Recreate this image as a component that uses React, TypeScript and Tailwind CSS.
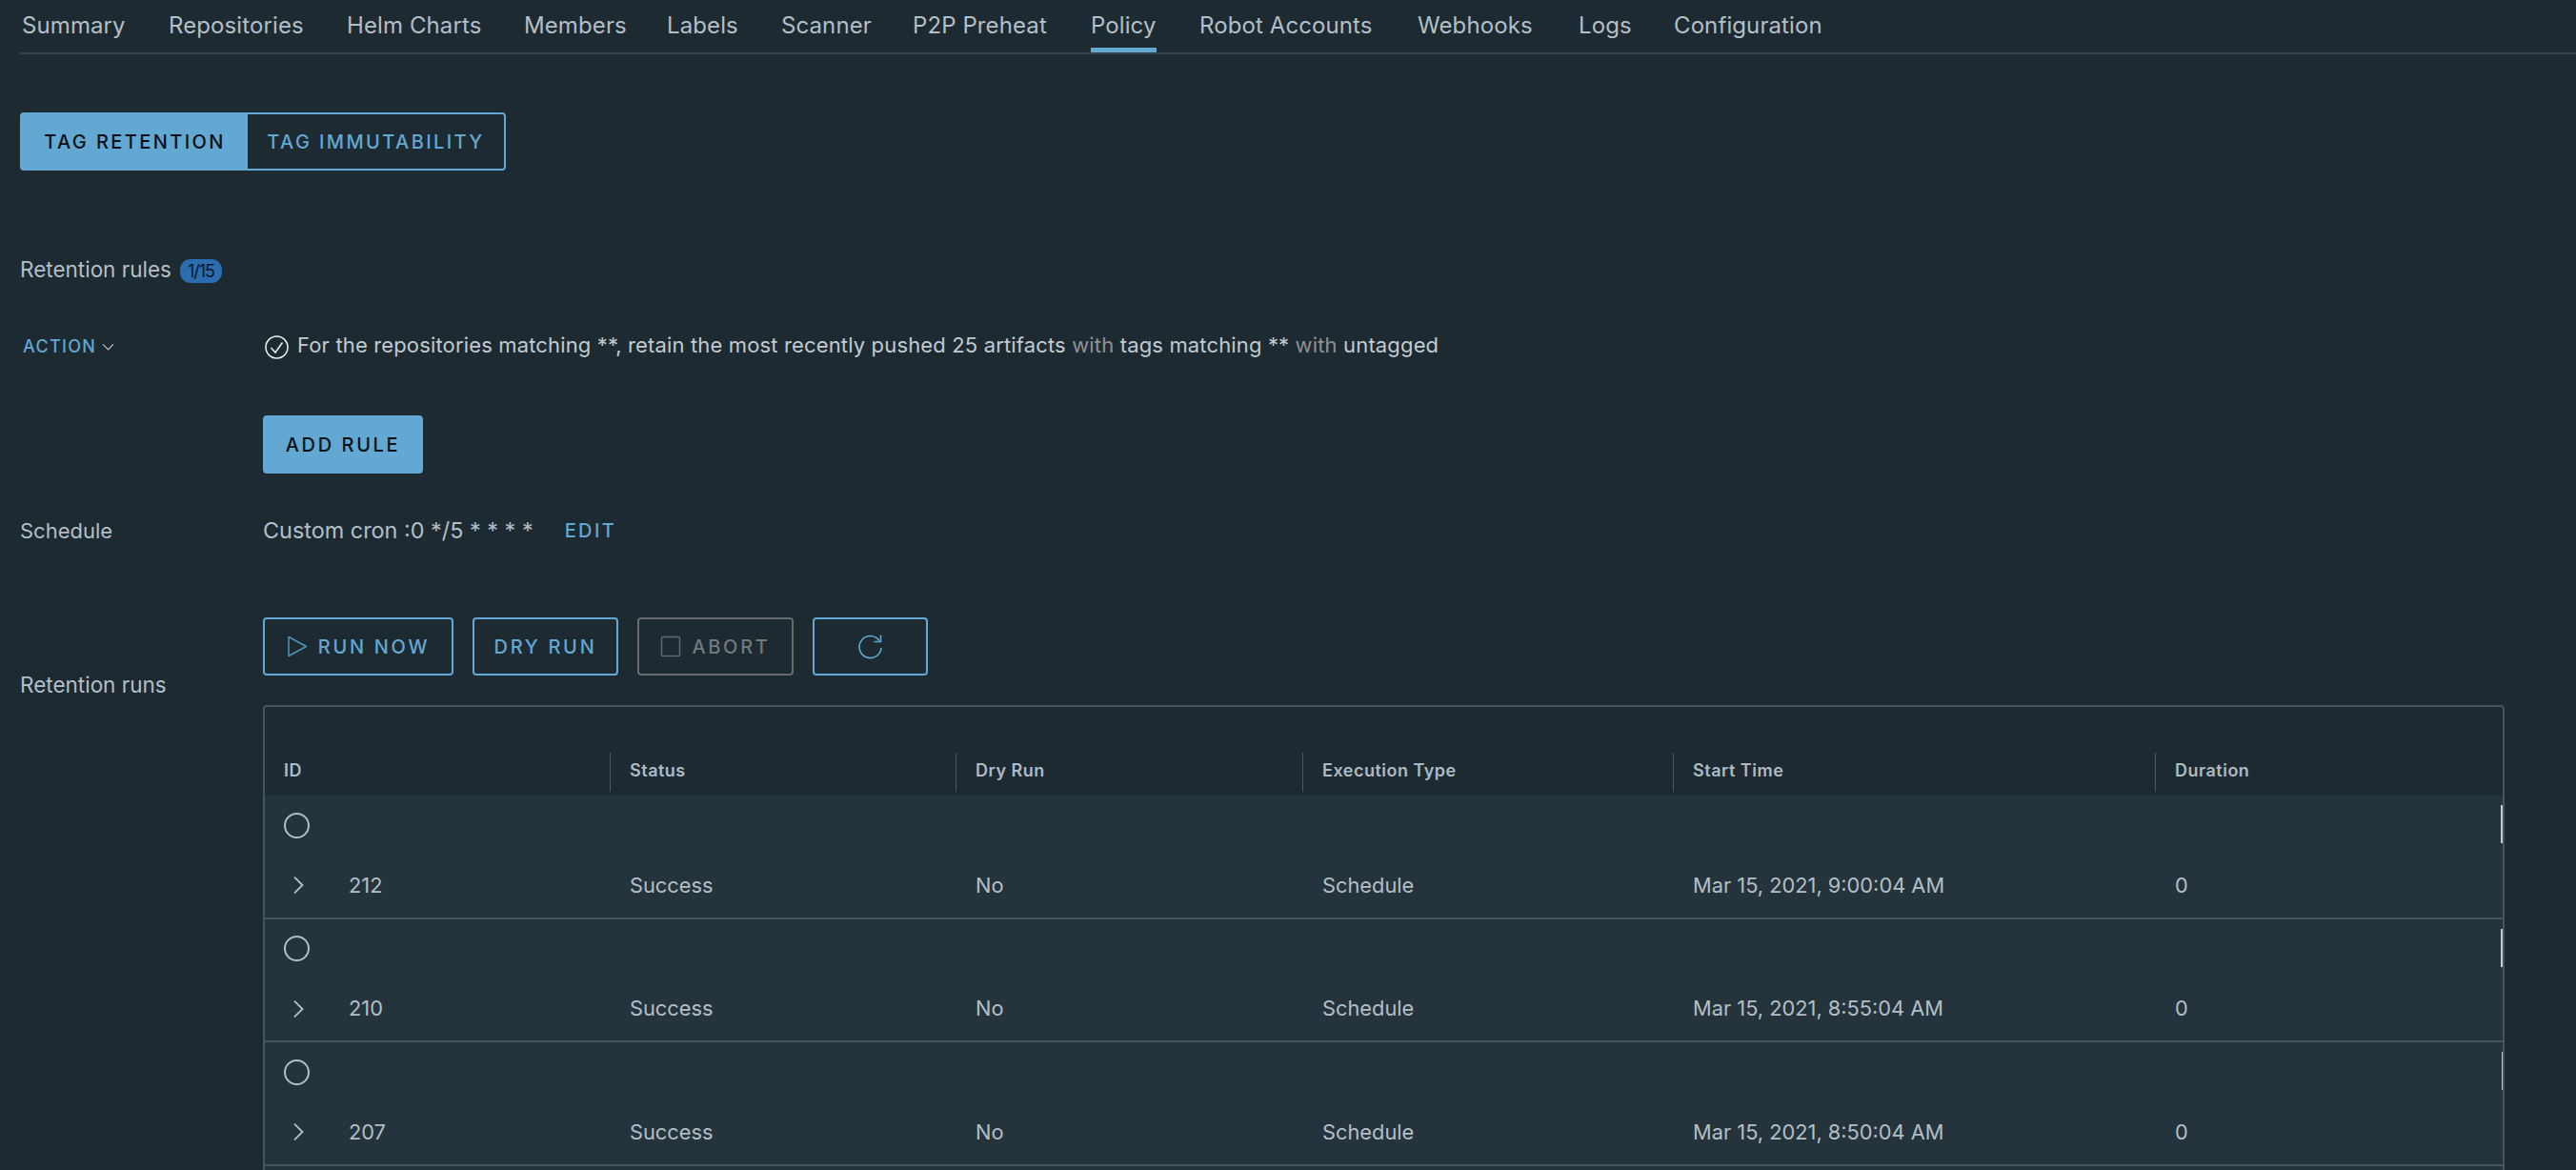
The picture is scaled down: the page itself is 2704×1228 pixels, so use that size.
const tabs = [
  { label: "Summary", width: "w-[109px]" },
  { label: "Repositories", width: "w-[142px]" },
  { label: "Helm Charts", width: "w-[141px]" },
  { label: "Members", width: "w-[105px]" },
  { label: "Labels", width: "w-[75px]" },
  { label: "Scanner", width: "w-[93px]" },
  { label: "P2P Preheat", width: "w-[142px]" },
  { label: "Policy", width: "w-[69px]", active: true },
  { label: "Robot Accounts", width: "w-[184px]" },
  { label: "Webhooks", width: "w-[124px]" },
  { label: "Logs", width: "w-[55px]" },
  { label: "Configuration", width: "w-[155px]" },
];

const columns = [
  { label: "ID", width: "w-[362px]" },
  { label: "Status", width: "w-[363px]" },
  { label: "Dry Run", width: "w-[364px]" },
  { label: "Execution Type", width: "w-[389px]" },
  { label: "Start Time", width: "w-[506px]" },
  { label: "Duration", width: "flex-1" },
];

const runs = [
  { id: "212", start: "Mar 15, 2021, 9:00:04 AM", notch: "w-[2px]" },
  { id: "210", start: "Mar 15, 2021, 8:55:04 AM", notch: "w-[2px]" },
  { id: "207", start: "Mar 15, 2021, 8:50:04 AM", notch: "w-px" },
];

const PlayIcon = () => (
  <svg width="22" height="23" viewBox="0 0 22 23" fill="none" stroke="#4f93ba" strokeWidth="1.5">
    <path d="M2 1.5v20L20.5 11.5z" strokeLinejoin="round" />
  </svg>
);

const SquareIcon = () => (
  <svg width="22" height="23" viewBox="0 0 22 23" fill="none" stroke="#5f6a70" strokeWidth="1.5">
    <rect x="1.5" y="1.5" width="19" height="20" rx="1" />
  </svg>
);

const RefreshIcon = () => (
  <svg width="28" height="28" viewBox="0 0 28 28" fill="none" stroke="#62a8d3" strokeWidth="1.6">
    <path d="M23 7.5A11.5 11.5 0 1 0 25 15" />
    <path d="M24.5 1.5v7h-7" />
  </svg>
);

const CheckCircleIcon = () => (
  <svg width="25" height="25" viewBox="0 0 25 25" fill="none" stroke="#eef1f3" strokeWidth="1.5">
    <circle cx="12.5" cy="12.5" r="11.5" />
    <path d="M6.5 13l4.5 5L18.5 7.5" />
  </svg>
);

const Chevron = ({ className }: { className?: string }) => (
  <svg className={className} width="12" height="18" viewBox="0 0 12 18" fill="none" stroke="#b7c2c9" strokeWidth="1.8">
    <path d="M2 .7l8.5 8.3L2 17.3" />
  </svg>
);

export default function App() {
  return (
    <div className="h-[1228px] overflow-hidden bg-[#1e2a32] pl-[21px] font-['Inter',sans-serif] text-[#b3bfc6]">
      <div className="flex h-[57px] gap-[45px] border-b-2 border-[#33424c] pl-[2px]">
        {tabs.map((tab) => (
          <div
            key={tab.label}
            className={`${tab.width} h-[55px] whitespace-nowrap border-b-[5px] pt-[10px] text-[24px] leading-[34px] tracking-[0.1px] ${
              tab.active ? "border-[#62a8d3]" : "border-transparent"
            }`}
          >
            {tab.label}
          </div>
        ))}
      </div>

      <div className="mt-[61px] flex h-[61px] w-[510px] rounded-[4px] border-2 border-[#62a8d3] text-[20px] font-medium tracking-[2.4px]">
        <div className="flex w-[237px] items-center justify-center bg-[#62a8d3] text-[#0b1216]">TAG RETENTION</div>
        <div className="flex flex-1 items-center justify-center text-[#62a8d3]">TAG IMMUTABILITY</div>
      </div>

      <div className="mt-[93px] flex h-[25px] items-center text-[22.5px]">
        <span className="mb-[3px]">Retention rules</span>
        <span className="ml-[9px] flex h-[25px] w-[44px] items-center justify-center rounded-[11px] bg-[#2a6db0] text-[18px] tracking-[-1px] text-[#0c1820]">
          1/15
        </span>
      </div>

      <div className="mt-[55px] grid grid-cols-[255px_1fr]">
        <div className="flex h-[24px] items-center gap-[8px] pb-[1px] pl-[3px] text-[18px] font-medium tracking-[1.3px] text-[#62a8d3]">
          ACTION
          <Chevron className="h-[12px] w-[9px] rotate-90" />
        </div>
        <div className="flex h-[24px] items-center gap-[9px] whitespace-nowrap pl-[2px] text-[22px] tracking-[0.15px] text-[#c1cbd1]">
          <CheckCircleIcon />
          <span className="mb-[3px]">
            For the repositories matching **, retain the most recently pushed 25 artifacts{" "}
            <span className="text-[#8f9192]">with</span> tags matching ** <span className="text-[#8f9192]">with</span>{" "}
            untagged
          </span>
        </div>

        <div />
        <button className="mt-[60px] h-[61px] w-[168px] rounded-[4px] bg-[#62a8d3] text-[20px] font-medium tracking-[2.6px] text-[#0b1216]">
          ADD RULE
        </button>

        <div className="mt-[45px] text-[22px] leading-[30px]">Schedule</div>
        <div className="mt-[45px] flex items-center gap-[33px] text-[23.4px] leading-[30px]">
          Custom cron :0 */5 * * * *
          <span className="text-[20px] font-medium tracking-[2.4px] text-[#62a8d3]">EDIT</span>
        </div>

        <div className="mt-[76px] pt-[56px] text-[22.5px] leading-[30px]">Retention runs</div>
        <div className="mt-[76px] pr-[75px]">
          <div className="flex gap-[20px] text-[20px] font-medium tracking-[2.7px] text-[#62a8d3]">
            <button className="flex h-[61px] w-[200px] items-center justify-center gap-[11px] rounded-[4px] border-2 border-[#62a8d3]">
              <PlayIcon />
              RUN NOW
            </button>
            <button className="h-[61px] w-[153px] rounded-[4px] border-2 border-[#62a8d3]">DRY RUN</button>
            <button className="flex h-[61px] w-[164px] items-center justify-center gap-[11px] rounded-[4px] border-2 border-[#666b6e] text-[#73787b]">
              <SquareIcon />
              ABORT
            </button>
            <button className="flex h-[61px] w-[121px] items-center justify-center rounded-[4px] border-2 border-[#62a8d3]">
              <RefreshIcon />
            </button>
          </div>

          <div className="mt-[31px] rounded-t-[4px] border-x-2 border-t-2 border-[#465560]">
            <div className="flex h-[93px] items-end pb-[4px] text-[18px] font-semibold tracking-[0.5px] text-[#aebac2]">
              {columns.map((col, i) => (
                <div
                  key={col.label}
                  className={`${col.width} flex h-[41px] items-start pt-[5px] ${
                    i === 0 ? "pl-[20px]" : "border-l border-[#4a5964] pl-[20px]"
                  }`}
                >
                  {col.label}
                </div>
              ))}
            </div>

            {runs.map((run) => (
              <div key={run.id} className="relative h-[129.5px] border-b-2 border-[#465560] bg-[#25343c] text-[21.8px]">
                <div className="flex h-[61px] items-center pl-[20px]">
                  <div className="mt-[1px] h-[27px] w-[27px] rounded-full border-2 border-[#b3bfc6]" />
                </div>
                <div className="flex h-[66px] items-center">
                  <div className="flex w-[362px] items-center pl-[29px]">
                    <Chevron className="mr-[47px]" />
                    {run.id}
                  </div>
                  <div className="w-[363px] pl-[21px]">Success</div>
                  <div className="w-[364px] pl-[21px]">No</div>
                  <div className="w-[389px] pl-[21px]">Schedule</div>
                  <div className="w-[506px] pl-[21px]">{run.start}</div>
                  <div className="flex-1 pl-[21px]">0</div>
                </div>
                <div className={`absolute right-0 top-[10px] h-[40px] bg-[#c3ccd1] ${run.notch}`} />
              </div>
            ))}
            <div className="h-[10px] bg-[#25343c]" />
          </div>
        </div>
      </div>
    </div>
  );
}
